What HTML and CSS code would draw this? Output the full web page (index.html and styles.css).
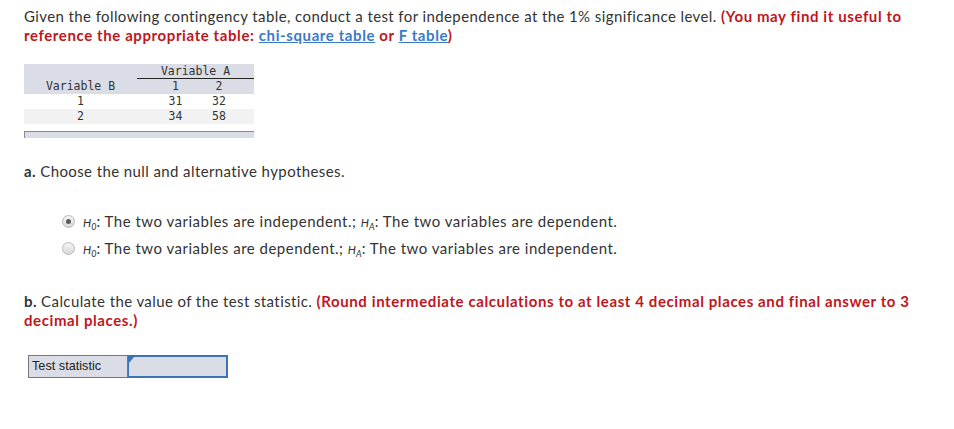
FILE: index.html
```html
<!DOCTYPE html>
<html>
<head>
<meta charset="utf-8">
<link rel="stylesheet" href="styles.css">
</head>
<body>
<div class="page">
  <p class="intro">Given the following contingency table, conduct a test for independence at the 1% significance level. <b class="red">(You may find it useful to</b> <b class="red">reference the appropriate table: <a class="link" href="#">chi-square table</a> or <a class="link" href="#">F table</a>)</b></p>

  <div class="ctable">
    <div class="row head1">
      <div class="cell c0"></div>
      <div class="cell span">Variable A</div>
    </div>
    <div class="row head2">
      <div class="cell c0">Variable B</div>
      <div class="cell c1">1</div>
      <div class="cell c2">2</div>
    </div>
    <div class="row r1">
      <div class="cell c0">1</div>
      <div class="cell c1">31</div>
      <div class="cell c2">32</div>
    </div>
    <div class="row r2">
      <div class="cell c0">2</div>
      <div class="cell c1">34</div>
      <div class="cell c2">58</div>
    </div>
    <div class="tfoot"></div>
  </div>

  <p class="qa"><b>a.</b> Choose the null and alternative hypotheses.</p>

  <div class="options">
    <label class="opt"><span class="radio checked"></span><span><i class="h">H<sub>0</sub></i>: The two variables are independent.; <i class="h">H<sub>A</sub></i>: The two variables are dependent.</span></label>
    <label class="opt"><span class="radio"></span><span><i class="h">H<sub>0</sub></i>: The two variables are dependent.; <i class="h">H<sub>A</sub></i>: The two variables are independent.</span></label>
  </div>

  <p class="qb"><b>b.</b> Calculate the value of the test statistic. <b class="red">(Round intermediate calculations to at least 4 decimal places and final answer to 3</b> <b class="red">decimal places.)</b></p>

  <div class="answer">
    <div class="alabel">Test statistic</div>
    <div class="ainput"><span class="flag"></span></div>
  </div>
</div>
</body>
</html>
```

FILE: styles.css
```css
html, body {
  margin: 0;
  padding: 0;
  background: #fff;
}
.page {
  padding: 7px 24px 0 24px;
  font-family: "Lato", "Open Sans", sans-serif;
  font-size: 15px;
  letter-spacing: 0.4px;
  color: #333;
  line-height: 19px;
}
p { margin: 0; }
.intro { width: 900px; }
.red { color: #c0161c; font-weight: 700; letter-spacing: 0.6px; }
.link { color: #3a7bc8; text-decoration: underline; }
.ctable {
  margin-top: 19px;
  width: 230px;
  font-family: "DejaVu Sans Mono", monospace;
  font-size: 11.5px;
  letter-spacing: 0;
  color: #333;
}
.row { display: flex; height: 15px; line-height: 15px; }
.head1, .head2 { background: #dadde6; }
.head1 { height: 15px; line-height: 15px; }
.r1 { background: #fff; }
.r2 { background: #f2f2f2; }
.cell { text-align: center; box-sizing: border-box; }
.c0 { width: 113px; }
.c1 { width: 59px; padding-left: 18px; }
.c2 { width: 58px; padding-right: 12px; }
.span { width: 117px; border-bottom: 1px solid #222; }
.tfoot {
  margin-top: 7px;
  height: 6px;
  background: #dadde6;
  border-top: 1px solid #8a8a8a;
  border-left: 1px solid #8a8a8a;
}
.qa { margin-top: 24px; }
.options {
  margin-top: 31px;
  padding-left: 38px;
  display: flex;
  flex-direction: column;
  gap: 8px;
}
.opt { display: flex; align-items: center; gap: 8px; height: 19px; letter-spacing: 0.5px; }
.radio {
  width: 11px; height: 11px;
  border-radius: 50%;
  border: 1px solid #b8b8b8;
  background: linear-gradient(#f6f6f6, #d8d8d8);
  position: relative;
  flex: none;
}
.radio.checked::after {
  content: "";
  position: absolute;
  left: 3px; top: 3px;
  width: 5px; height: 5px;
  border-radius: 50%;
  background: #5a5a5a;
}
.h { font-size: 11.5px; letter-spacing: 0; }
.h sub { font-size: 9px; line-height: 0; vertical-align: -3px; }
.qb { margin-top: 34px; width: 900px; }
.answer {
  margin-top: 25px;
  margin-left: 4px;
  display: flex;
  height: 23px;
  font-family: "Liberation Sans", Arial, sans-serif;
  font-size: 12.7px;
  letter-spacing: 0;
}
.alabel {
  width: 100px;
  box-sizing: border-box;
  border: 1px solid #777;
  background: #dadde6;
  padding-left: 3px;
  line-height: 21px;
  color: #222;
}
.ainput {
  width: 100px;
  box-sizing: border-box;
  border: 2px solid #3b73b9;
  border-left-width: 1px;
  background: #dadde6;
  position: relative;
}
.flag {
  position: absolute;
  left: 0; top: 0;
  width: 0; height: 0;
  border-top: 6px solid #3b73b9;
  border-right: 5px solid transparent;
}
```
